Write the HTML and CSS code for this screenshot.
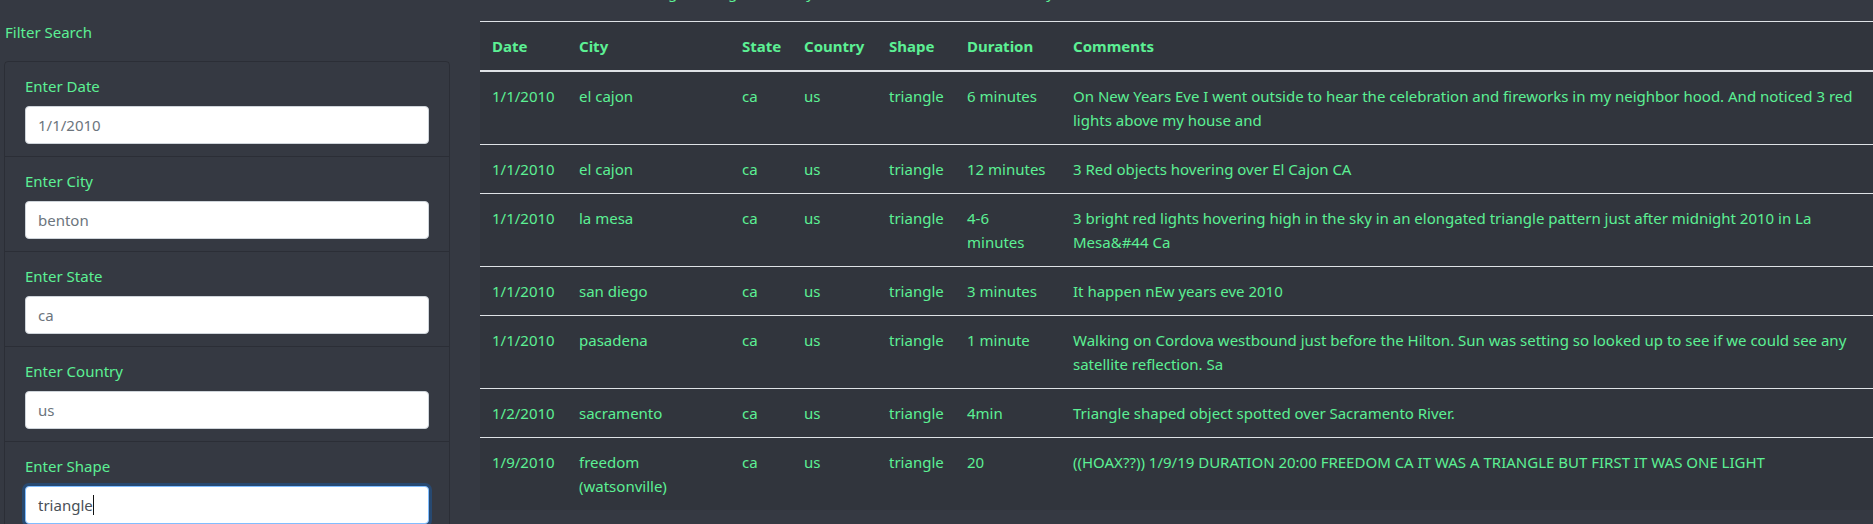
FILE: index.html
```html
<!DOCTYPE html>
<html lang="en">
<head>
<meta charset="utf-8">
<title>UFO Sightings</title>
<link rel="stylesheet" href="styles.css">
</head>
<body>
<div class="layout">
  <aside class="filters">
    <div class="filters-title">Filter Search</div>
    <ul class="filter-card">
      <li class="filter-item">
        <label class="filter-label" for="datetime">Enter Date</label>
        <input class="field" id="datetime" type="text" placeholder="1/1/2010">
      </li>
      <li class="filter-item">
        <label class="filter-label" for="city">Enter City</label>
        <input class="field" id="city" type="text" placeholder="benton">
      </li>
      <li class="filter-item">
        <label class="filter-label" for="state">Enter State</label>
        <input class="field" id="state" type="text" placeholder="ca">
      </li>
      <li class="filter-item">
        <label class="filter-label" for="country">Enter Country</label>
        <input class="field" id="country" type="text" placeholder="us">
      </li>
      <li class="filter-item">
        <label class="filter-label" for="shape">Enter Shape</label>
        <div class="field-wrap">
          <input class="field field-focus" id="shape" type="text" value="triangle">
          <div class="caret-layer"><span class="ghost">triangle</span><span class="caret"></span></div>
        </div>
      </li>
    </ul>
  </aside>
  <main class="results">
    <p class="intro">new witnesses are coming to bring their story forward, and the data now clearly shows the truth is out there.</p>
    <table class="sightings">
      <colgroup>
        <col class="c-date"><col class="c-city"><col class="c-state"><col class="c-country"><col class="c-shape"><col class="c-duration"><col class="c-comments">
      </colgroup>
      <thead>
        <tr><th>Date</th><th>City</th><th>State</th><th>Country</th><th>Shape</th><th>Duration</th><th>Comments</th></tr>
      </thead>
      <tbody>
        <tr><td>1/1/2010</td><td>el cajon</td><td>ca</td><td>us</td><td>triangle</td><td>6 minutes</td><td>On New Years Eve I went outside to hear the celebration and fireworks in my neighbor hood. And noticed 3 red lights above my house and</td></tr>
        <tr><td>1/1/2010</td><td>el cajon</td><td>ca</td><td>us</td><td>triangle</td><td>12 minutes</td><td>3 Red objects hovering over El Cajon CA</td></tr>
        <tr><td>1/1/2010</td><td>la mesa</td><td>ca</td><td>us</td><td>triangle</td><td>4-6 minutes</td><td>3 bright red lights hovering high in the sky in an elongated triangle pattern just after midnight 2010 in La Mesa&amp;#44 Ca</td></tr>
        <tr><td>1/1/2010</td><td>san diego</td><td>ca</td><td>us</td><td>triangle</td><td>3 minutes</td><td>It happen nEw years eve 2010</td></tr>
        <tr><td>1/1/2010</td><td>pasadena</td><td>ca</td><td>us</td><td>triangle</td><td>1 minute</td><td>Walking on Cordova westbound just before the Hilton. Sun was setting so looked up to see if we could see any satellite reflection. Sa</td></tr>
        <tr><td>1/2/2010</td><td>sacramento</td><td>ca</td><td>us</td><td>triangle</td><td>4min</td><td>Triangle shaped object spotted over Sacramento River.</td></tr>
        <tr><td>1/9/2010</td><td>freedom (watsonville)</td><td>ca</td><td>us</td><td>triangle</td><td>20</td><td>((HOAX??)) 1/9/19 DURATION 20:00 FREEDOM CA IT WAS A TRIANGLE BUT FIRST IT WAS ONE LIGHT</td></tr>
      </tbody>
    </table>
  </main>
</div>
</body>
</html>
```
FILE: styles.css
```css
html, body {
  margin: 0;
  padding: 0;
}

body {
  background: #353942;
  color: #5cf094;
  font-family: "Noto Sans", "Open Sans", sans-serif;
  font-size: 15px;
  line-height: 24px;
  overflow: hidden;
}

.layout {
  display: grid;
  grid-template-columns: 446px 1fr;
  column-gap: 30px;
  padding-left: 4px;
}

/* ---------- filters ---------- */
.filters-title {
  margin-top: 20px;
  padding-left: 1px;
  height: 24px;
}

.filter-card {
  list-style: none;
  margin: 17px 0 0;
  padding: 0;
  border: 1px solid rgba(0, 0, 0, 0.18);
  border-radius: 4px;
}

.filter-item {
  display: flex;
  flex-direction: column;
  padding: 12px 20px;
  border-bottom: 1px solid rgba(0, 0, 0, 0.18);
}

.filter-label {
  display: block;
  margin-bottom: 8px;
  height: 24px;
}

.field {
  box-sizing: border-box;
  display: block;
  width: 100%;
  height: 38px;
  margin: 0;
  padding: 6px 12px;
  font-family: "Noto Sans", "Open Sans", sans-serif;
  font-size: 15px;
  line-height: 24px;
  color: #495057;
  background: #fff;
  border: 1px solid #ced4da;
  border-radius: 4px;
  outline: none;
}

.field::placeholder {
  color: #6c757d;
  opacity: 1;
}

.field-wrap {
  position: relative;
}

.field-focus {
  border-color: #80bdff;
  box-shadow: 0 0 0 3px rgba(0, 123, 255, 0.25);
}

.caret-layer {
  position: absolute;
  left: 0;
  top: 0;
  padding: 7px 13px;
  font-size: 15px;
  line-height: 24px;
  pointer-events: none;
  display: flex;
  align-items: center;
}

.ghost {
  color: transparent;
}

.caret {
  display: inline-block;
  width: 1px;
  height: 20px;
  background: #111;
}

/* ---------- results ---------- */
.results {
  min-width: 0;
}

.intro {
  margin: -20px 0 17px;
  padding-left: 12px;
  white-space: nowrap;
  overflow: hidden;
}

.sightings {
  width: 100%;
  table-layout: fixed;
  border-collapse: collapse;
  background: #31353d;
}

.c-date { width: 87px; }
.c-city { width: 163px; }
.c-state { width: 62px; }
.c-country { width: 85px; }
.c-shape { width: 78px; }
.c-duration { width: 106px; }
.c-comments { width: auto; }

.sightings th,
.sightings td {
  padding: 12px;
  text-align: left;
  vertical-align: top;
  border-top: 1px solid #dee2e6;
}

.sightings th {
  font-weight: 700;
  vertical-align: bottom;
  border-bottom: 2px solid #dee2e6;
}

.sightings tbody tr:first-child td {
  border-top: 0;
}
```
